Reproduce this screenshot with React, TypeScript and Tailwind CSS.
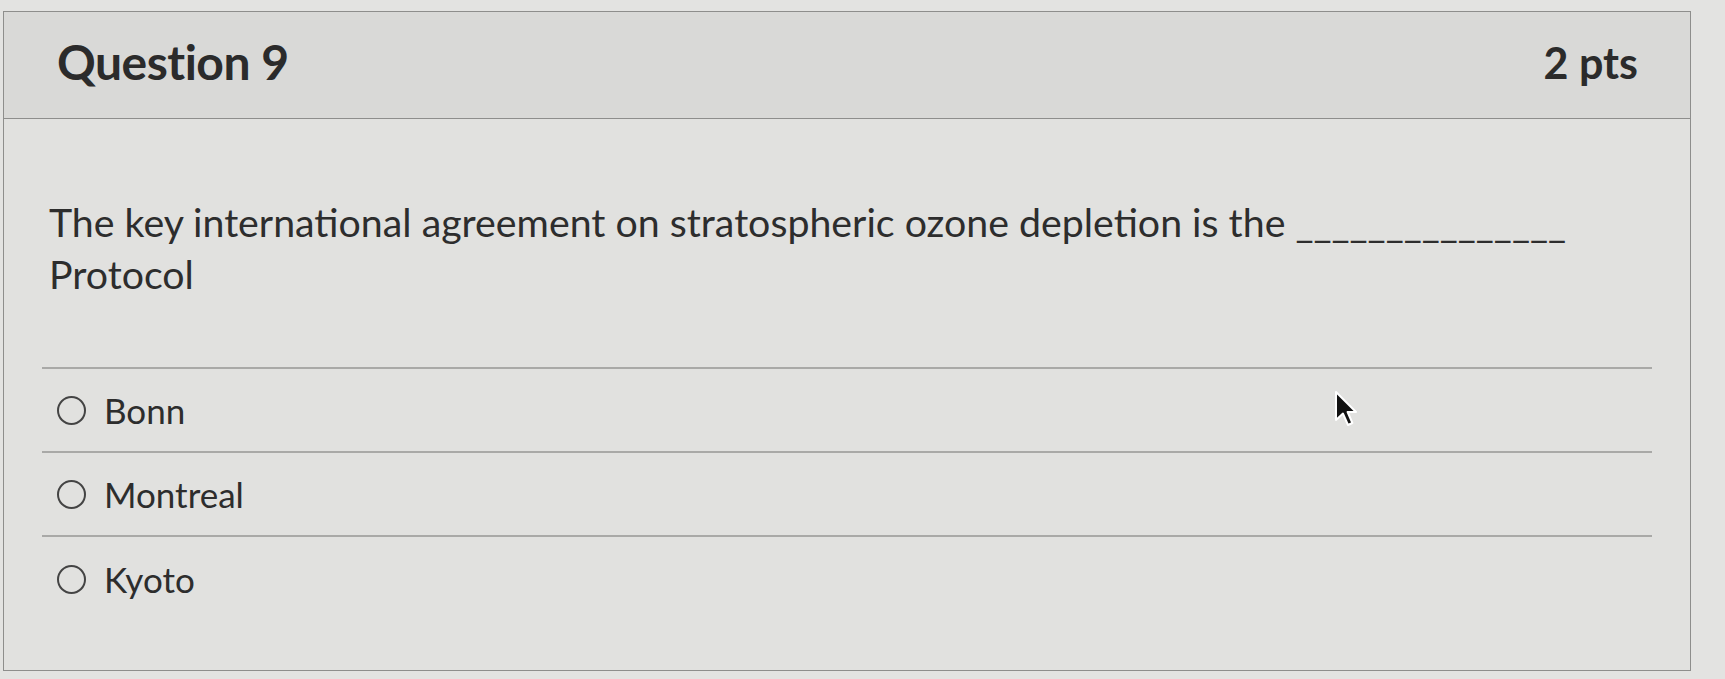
import React from 'react'

const answers = ['Bonn', 'Montreal', 'Kyoto']

const Cursor = () => (
  <svg width="24" height="38" viewBox="0 0 12 19" className="absolute left-[1334px] top-[390px]">
    <path d="M1 1 L1 15 L4.5 11.8 L7 17.5 L9.2 16.5 L6.8 11 L11 11 Z" fill="#111" stroke="#fff" strokeWidth="1" strokeLinejoin="round" />
  </svg>
)

const App = () => {
  return (
    <div
      className="relative w-[1725px] h-[679px] overflow-hidden bg-[#e3e3e1] pt-[11px] pl-[3px]"
      style={{ fontFamily: 'Lato, "Open Sans", sans-serif' }}
    >
      <div className="w-[1688px] h-[660px] border border-[#8e8e8c] bg-[#e1e1df] flex flex-col">
        <div className="h-[107px] flex flex-row items-center justify-between pl-[53px] pr-[52px] pb-[6px] bg-[#d9d9d7] border-b border-[#8e8e8c] text-[#2b2b2b]">
          <p className="text-[48px] font-bold leading-none tracking-[-0.5px]">Question 9</p>
          <p className="text-[43px] font-bold leading-none">2 pts</p>
        </div>

        <div className="flex flex-col pt-[77px] pl-[45px] pr-[40px]">
          <p className="text-[39.3px] leading-[52px] text-[#2d2d2d]">
            The key international agreement on stratospheric ozone depletion is the _______________
            <br />
            Protocol
          </p>

          <div className="mt-[67px] ml-[-7px] mr-[-2px] border-t-2 border-[#a9a9a7]">
            {answers.map((a, i) => (
              <div
                key={a}
                className={
                  'h-[84px] flex flex-row items-center gap-[18px] pl-[15px] ' +
                  (i < answers.length - 1 ? 'border-b-2 border-[#a9a9a7]' : '')
                }
              >
                <span className="w-[29px] h-[29px] rounded-full border-2 border-[#444]" />
                <span className="text-[35px] text-[#2d2d2d]">{a}</span>
              </div>
            ))}
          </div>
        </div>
      </div>
      <Cursor />
    </div>
  )
}

export default App
